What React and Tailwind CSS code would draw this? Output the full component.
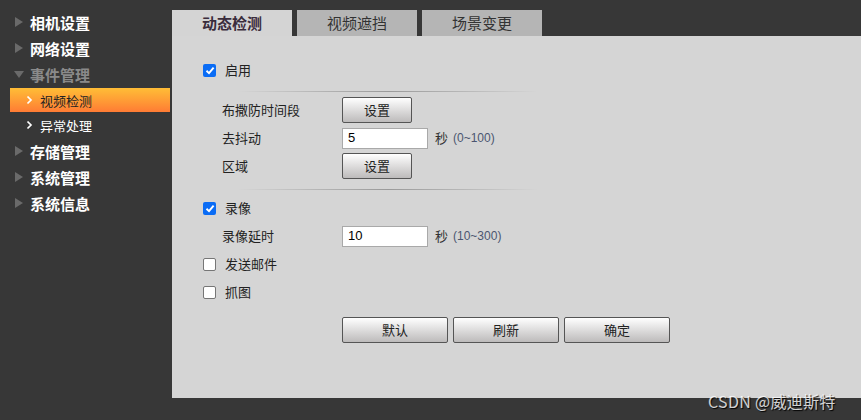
const font = { fontFamily: '"Microsoft YaHei", "Noto Sans CJK SC", "Liberation Sans", sans-serif' };

const menu = [
  { label: '相机设置' },
  { label: '网络设置' },
  {
    label: '事件管理',
    open: true,
    children: [
      { label: '视频检测', active: true },
      { label: '异常处理' },
    ],
  },
  { label: '存储管理' },
  { label: '系统管理' },
  { label: '系统信息' },
];

function Triangle({ down }) {
  return (
    <svg width="10" height="12" viewBox="0 0 10 12" className="shrink-0">
      {down ? (
        <polygon points="0,3 10,3 5,10" fill="#6a6a6a" />
      ) : (
        <polygon points="1,1 9,6 1,11" fill="#6a6a6a" />
      )}
    </svg>
  );
}

function Chevron() {
  return (
    <svg width="7" height="10" viewBox="0 0 7 10" className="shrink-0">
      <polyline points="1.5,1.5 5,5 1.5,8.5" fill="none" stroke="#ffffff" strokeWidth="1.7" />
    </svg>
  );
}

function Sidebar() {
  return (
    <div className="w-[172px] shrink-0 pt-[9px]">
      {menu.map((item) => (
        <div key={item.label}>
          <div className="h-[26px] flex items-center pl-[14px] gap-[6px]">
            <Triangle down={item.open} />
            <span
              className={`text-[15px] font-bold leading-none ${item.open ? 'text-[#8a8a8a]' : 'text-white'}`}
            >
              {item.label}
            </span>
          </div>
          {item.children &&
            item.children.map((c) => (
              <div
                key={c.label}
                className={`ml-[10px] mr-[2px] h-[24px] mt-[1px] mb-[1px] flex items-center pl-[16px] gap-[7px] ${
                  c.active ? 'bg-gradient-to-b from-[#ffbd36] to-[#ff7b34]' : ''
                }`}
              >
                <Chevron />
                <span className={`text-[13px] leading-none ${c.active ? 'text-[#222]' : 'text-white'}`}>{c.label}</span>
              </div>
            ))}
        </div>
      ))}
    </div>
  );
}

function Check({ checked }) {
  return checked ? (
    <span className="w-[13px] h-[13px] rounded-[2px] bg-[#0a6cf5] flex items-center justify-center shrink-0">
      <svg width="10" height="9" viewBox="0 0 10 9">
        <polyline points="1.5,4.8 4,7.2 8.6,1.6" fill="none" stroke="white" strokeWidth="1.9" />
      </svg>
    </span>
  ) : (
    <span className="w-[13px] h-[13px] rounded-[2px] border border-[#767676] bg-white shrink-0" />
  );
}

function Btn({ children, w = 'w-[70px]' }) {
  return (
    <button
      className={`${w} h-[26px] border border-[#555] rounded-[2px] bg-gradient-to-b from-white to-[#bdbbbb] text-[13px] text-[#222] flex items-center justify-center`}
    >
      {children}
    </button>
  );
}

function Sep() {
  return <div className="ml-[66px] w-[300px] h-px bg-gradient-to-r from-transparent via-[#9a9a9a] to-transparent" />;
}

function Row({ label, children, h = 'h-[28px]' }) {
  return (
    <div className={`${h} flex items-center pl-[50px]`}>
      <span className="w-[120px] text-[13px] text-[#222]">{label}</span>
      {children}
    </div>
  );
}

function NumInput({ value, range }) {
  return (
    <div className="flex items-center">
      <div className="w-[86px] h-[21px] border border-[#a9a9a9] bg-white flex items-center px-[5px] text-[13px] text-black" style={{ fontFamily: '"Liberation Sans", sans-serif' }}>
        {value}
      </div>
      <span className="ml-[7px] text-[13px] text-[#333]">秒</span>
      <span className="ml-[5px] text-[12px] text-[#4b5570]" style={{ fontFamily: '"Liberation Sans", sans-serif' }}>{range}</span>
    </div>
  );
}

function CheckRow({ checked, label }) {
  return (
    <div className="h-[28px] flex items-center pl-[31px] gap-[9px]">
      <Check checked={checked} />
      <span className="text-[13px] text-[#222]">{label}</span>
    </div>
  );
}

export default function App() {
  const tabs = ['动态检测', '视频遮挡', '场景变更'];
  return (
    <div className="w-[861px] h-[420px] bg-[#373737] flex relative overflow-hidden" style={font}>
      <Sidebar />
      <div className="flex-1 pt-[10px] flex flex-col">
        <div className="flex gap-[5px] h-[26px]">
          {tabs.map((t, i) => (
            <div
              key={t}
              className={`w-[120px] flex items-center justify-center text-[15px] ${
                i === 0 ? 'bg-[#d4d4d4] text-[#3a2c3c] font-bold' : 'bg-[#b5b5b5] text-[#333]'
              }`}
            >
              {t}
            </div>
          ))}
        </div>
        <div className="h-[362px] bg-[#d5d5d5] pt-[20px]">
          <CheckRow checked label="启用" />
          <div className="h-[7px]" />
          <Sep />
          <div className="mt-[4px]">
            <Row label="布撒防时间段">
              <Btn>设置</Btn>
            </Row>
            <Row label="去抖动">
              <NumInput value="5" range="(0~100)" />
            </Row>
            <Row label="区域">
              <Btn>设置</Btn>
            </Row>
          </div>
          <div className="h-[9px]" />
          <Sep />
          <div className="mt-[4px]">
            <CheckRow checked label="录像" />
            <Row label="录像延时">
              <NumInput value="10" range="(10~300)" />
            </Row>
            <CheckRow label="发送邮件" />
            <CheckRow label="抓图" />
          </div>
          <div className="flex gap-[5px] pl-[170px] mt-[11px]">
            <Btn w="w-[106px]">默认</Btn>
            <Btn w="w-[106px]">刷新</Btn>
            <Btn w="w-[106px]">确定</Btn>
          </div>
        </div>
      </div>
      <div className="absolute left-[708px] top-[389px] text-[16px] tracking-[0.3px] text-white/80 [text-shadow:1px_1px_1px_#000]">
        CSDN @威迪斯特
      </div>
    </div>
  );
}
